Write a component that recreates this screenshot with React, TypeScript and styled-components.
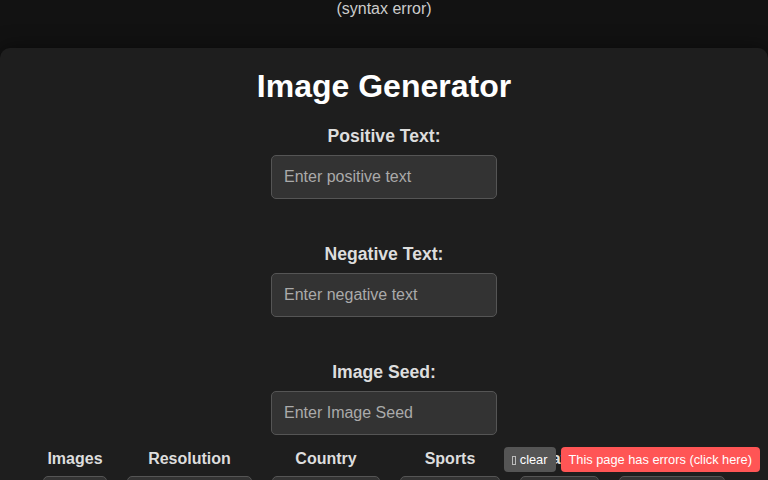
import React from "react";
import styled, { createGlobalStyle } from "styled-components";

const GlobalStyle = createGlobalStyle`
	html, body {
		margin: 0;
		height: 100%;
		overflow: hidden;
		background: #121212;
		font-family: "Liberation Sans", Arial, sans-serif;
	}
`;

const Status = styled.div`
	height: 48px;
	text-align: center;
	font-size: 16px;
	line-height: 18px;
	color: #cccccc;
`;

const Panel = styled.main`
	background: #1e1e1e;
	border-radius: 10px;
	box-shadow: 0 0 20px rgba(0, 0, 0, 0.5);
	padding: 20px 0 0;
	display: flex;
	flex-direction: column;
	align-items: center;
`;

const Title = styled.h1`
	margin: 0 0 21px;
	font-size: 32px;
	line-height: 37px;
	font-weight: 700;
	color: #ffffff;
`;

const FieldStack = styled.div`
	display: flex;
	flex-direction: column;
	gap: 45px;
	margin-bottom: 15px;
`;

const Field = styled.div`
	display: flex;
	flex-direction: column;
	align-items: center;
`;

const Label = styled.label`
	font-size: 17.6px;
	line-height: 21px;
	font-weight: 700;
	color: #dddddd;
	margin-bottom: 8px;
`;

const TextInput = styled.input`
	box-sizing: border-box;
	width: 226px;
	height: 44px;
	padding: 0 12px;
	background: #333333;
	border: 1px solid #555555;
	border-radius: 5px;
	font-family: inherit;
	font-size: 16px;
	color: #ffffff;

	&::placeholder {
		color: #aaaaaa;
		opacity: 1;
	}
`;

const OptionRow = styled.div`
	display: flex;
	justify-content: center;
	gap: 20px;
`;

const OptionColumn = styled.div`
	display: flex;
	flex-direction: column;
	align-items: center;
`;

const OptionLabel = styled.label`
	font-size: 16px;
	line-height: 18px;
	font-weight: 700;
	color: #dddddd;
	margin-bottom: 8px;
`;

const Select = styled.div<{ width: number }>`
	box-sizing: border-box;
	width: ${(props) => props.width}px;
	height: 40px;
	background: #333333;
	border: 1px solid #555555;
	border-radius: 5px;
`;

const ErrorBar = styled.div`
	position: fixed;
	right: 8px;
	bottom: 8px;
	display: flex;
	gap: 5px;
`;

const BarButton = styled.button<{ tone: string }>`
	height: 25px;
	padding: 0 8px;
	border: 0;
	border-radius: 4px;
	background: ${(props) => props.tone};
	color: #ffffff;
	font-family: inherit;
	font-size: 12.8px;
`;

// the emoji has no glyph in the reference, it shows as a thin missing-glyph box
const MissingGlyph = styled.span`
	display: inline-block;
	box-sizing: border-box;
	width: 4.5px;
	height: 9px;
	margin-right: 3.5px;
	border: 1px solid #bbbbbb;
	vertical-align: -1px;
`;

const options = [
	{ label: "Images", width: 64 },
	{ label: "Resolution", width: 125 },
	{ label: "Country", width: 108 },
	{ label: "Sports", width: 100 },
	{ label: "Weather", width: 79 },
	{ label: "Style", width: 106 },
];

export default function App() {
	return (
		<>
			<GlobalStyle />
			<Status>(syntax error)</Status>
			<Panel>
				<Title>Image Generator</Title>
				<FieldStack>
					<Field>
						<Label>Positive Text:</Label>
						<TextInput placeholder="Enter positive text" />
					</Field>
					<Field>
						<Label>Negative Text:</Label>
						<TextInput placeholder="Enter negative text" />
					</Field>
					<Field>
						<Label>Image Seed:</Label>
						<TextInput placeholder="Enter Image Seed" />
					</Field>
				</FieldStack>
				<OptionRow>
					{options.map((option) => (
						<OptionColumn key={option.label}>
							<OptionLabel>{option.label}</OptionLabel>
							<Select width={option.width} />
						</OptionColumn>
					))}
				</OptionRow>
			</Panel>
			<ErrorBar>
				<BarButton tone="#555555">
					<MissingGlyph />
					clear
				</BarButton>
				<BarButton tone="#ff5555">This page has errors (click here)</BarButton>
			</ErrorBar>
		</>
	);
}
